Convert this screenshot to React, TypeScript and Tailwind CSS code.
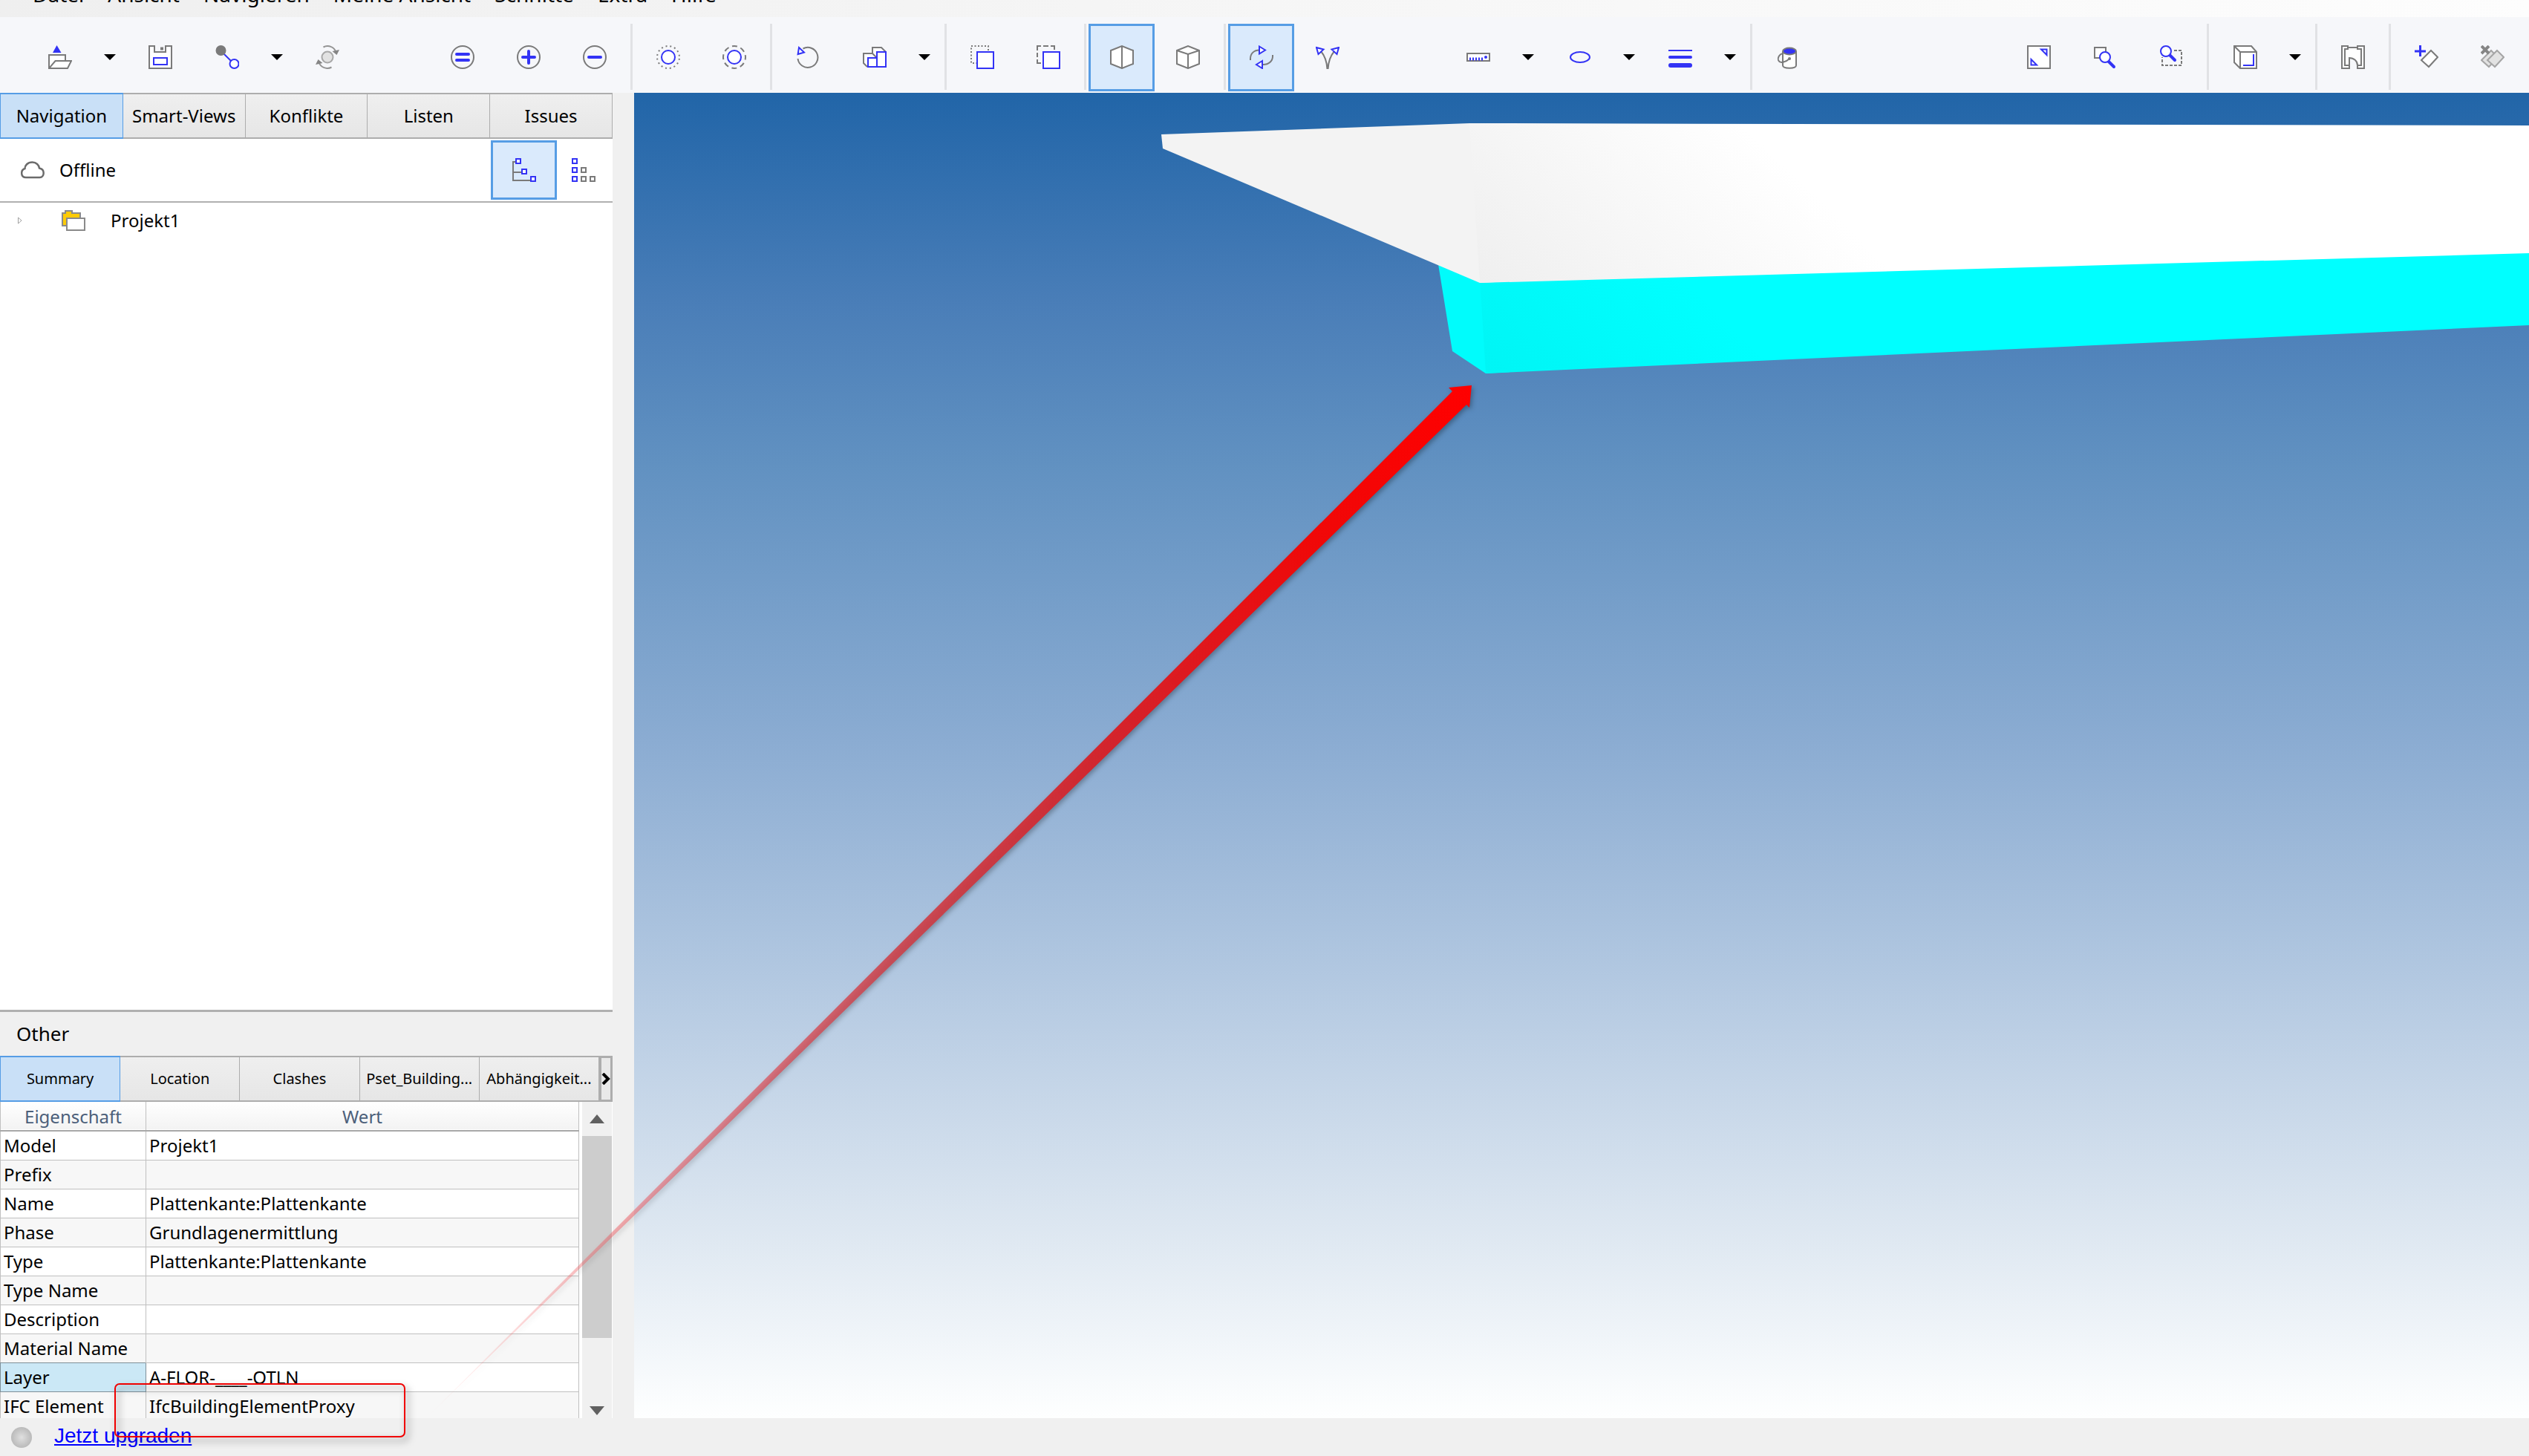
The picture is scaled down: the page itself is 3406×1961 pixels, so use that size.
import type { ReactNode } from "react";

const GRAY = "#7a7a7a";
const BLUE = "#3333f5";

function Icon({ children }: { children: ReactNode }) {
  return (
    <svg viewBox="0 0 32 32" className="size-8 shrink-0" fill="none" stroke={GRAY} strokeWidth="2">
      {children}
    </svg>
  );
}

const icons = {
  open: (
    <Icon>
      <path d="M6 10L11.5 0L17.5 10z" fill={BLUE} stroke="none" />
      <path d="M1 31V13h22v8" fill="#fff" />
      <path d="M9.500 21H31L26 31H1z" fill="#fff" />
    </Icon>
  ),
  save: (
    <Icon>
      <path d="M1 1h7v8h15V1h8v30H1z" fill="#fff" />
      <path d="M18 2.500v4" strokeWidth="4" />
      <rect x="7" y="17" width="18" height="9" stroke={BLUE} />
    </Icon>
  ),
  link: (
    <Icon>
      <path d="M9 9l13 13" stroke={BLUE} />
      <circle cx="7.500" cy="7" r="7" fill={GRAY} stroke="none" />
      <circle cx="25.500" cy="25" r="6" fill="#fff" stroke={BLUE} />
    </Icon>
  ),
  refresh: (
    <Icon>
      <circle cx="16" cy="16" r="7.500" fill="#e2e2e2" stroke="#a8a8a8" />
      <path d="M10.500 2.500C17 -1 25 2 27.500 9M21.500 29.500C15 33 7 30 4.500 23" stroke="#949494" />
      <path d="M22.500 8L32 6l-3.500 7zM9.500 24L0 26l3.500-7z" fill="#858585" stroke="none" />
    </Icon>
  ),
  equals: (
    <Icon>
      <circle cx="16" cy="16" r="15" />
      <path d="M8 12h16M8 20h16" stroke={BLUE} strokeWidth="4" strokeLinecap="round" />
    </Icon>
  ),
  plus: (
    <Icon>
      <circle cx="16" cy="16" r="15" />
      <path d="M8 16h16M16 8v16" stroke={BLUE} strokeWidth="4" strokeLinecap="round" />
    </Icon>
  ),
  minus: (
    <Icon>
      <circle cx="16" cy="16" r="15" />
      <path d="M8 16h16" stroke={BLUE} strokeWidth="4" strokeLinecap="round" />
    </Icon>
  ),
  dotted: (
    <Icon>
      <circle cx="16" cy="16" r="15" strokeDasharray="2 3.890" strokeDashoffset="4" />
      <circle cx="16" cy="16" r="9" fill="#fff" stroke={BLUE} />
    </Icon>
  ),
  dashed: (
    <Icon>
      <circle cx="16" cy="16" r="15" strokeDasharray="7 4.780" strokeDashoffset="3.500" />
      <circle cx="16" cy="16" r="9" fill="#fff" stroke={BLUE} />
    </Icon>
  ),
  rotate: (
    <Icon>
      <path d="M2.500 18A13.500 13.500 0 1 0 9.500 4.500" />
      <path d="M4 3l7 6.500L2.600 12z" fill="#fff" stroke={BLUE} />
    </Icon>
  ),
  build: (
    <Icon>
      <path d="M6 29l-5-5V11h12V3h12l6 6L19 29z" fill="#fff" stroke="none" />
      <path d="M6 29l-5-5V11h12V3h12l6 6M13 11l6 6" />
      <rect x="7" y="17" width="12" height="12" fill="#fff" stroke={BLUE} />
      <rect x="19" y="9" width="12" height="20" fill="#fff" stroke={BLUE} />
    </Icon>
  ),
  selectDotted: (
    <Icon>
      <path d="M24 7V1H1v23h7" strokeDasharray="2 2.500" />
      <rect x="9" y="9" width="22" height="22" fill="#fff" stroke={BLUE} />
    </Icon>
  ),
  selectDashed: (
    <Icon>
      <path d="M24 6V1h-5M16 1H9M6 1H1v6M1 10v6M1 19v5h5" />
      <rect x="9" y="9" width="22" height="22" fill="#fff" stroke={BLUE} />
    </Icon>
  ),
  halfCube: (
    <Icon>
      <path d="M1 7l15-6 15 6v18l-15 6-15-6z" fill="#fff" />
      <path d="M16 1v30" />
    </Icon>
  ),
  cube: (
    <Icon>
      <path d="M1 7l15-6 15 6v18l-15 6-15-6z" fill="#fff" />
      <path d="M1 7l15 5 15-5M16 12v19" />
    </Icon>
  ),
  orbit: (
    <Icon>
      <path d="M1 20V18C1 11 6 6.500 13 6.500M31 13v2c0 6-5 11-13 11" />
      <path d="M13 1.500l8 5L13 11.500zM17 21l-8 5 8 5z" fill="#fff" stroke={BLUE} />
    </Icon>
  ),
  fork: (
    <Icon>
      <path d="M7 8c5 6 8 13 8.500 24M25 8c-5 6-8 13-8.500 24" />
      <path d="M1 3l9.500 2.500L3.500 12zM31 3l-9.500 2.500L28.500 12z" fill="#fff" stroke={BLUE} />
    </Icon>
  ),
  ruler: (
    <Icon>
      <rect x="1" y="11" width="30" height="10" fill="#fff" />
      <path d="M5 16.500v4M9 16.500v4M13 16.500v4M17 16.500v4M21 16.500v4" stroke={BLUE} />
      <circle cx="26" cy="16" r="2" fill={BLUE} stroke="none" />
    </Icon>
  ),
  ellipse: (
    <Icon>
      <ellipse cx="17" cy="16" rx="13" ry="7" stroke={BLUE} />
    </Icon>
  ),
  lines: (
    <Icon>
      <g stroke={BLUE}>
        <path d="M0 7h32" />
        <path d="M2 16h28" strokeWidth="4" strokeLinecap="round" />
        <path d="M3 27h26" strokeWidth="6" strokeLinecap="round" />
      </g>
    </Icon>
  ),
  bucket: (
    <Icon>
      <path d="M9 8v19c0 5 18 5 18 0V8" fill="#fff" />
      <ellipse cx="18" cy="8" rx="9" ry="4.500" fill={BLUE} />
      <path d="M9 11C4 12 2 17 3 20c2 5 10 3 15-2" />
      <circle cx="18" cy="18" r="2" fill={GRAY} stroke="none" />
    </Icon>
  ),
  expand: (
    <Icon>
      <rect x="1" y="1" width="30" height="30" fill="#fff" />
      <path d="M19 5.500h7.500V13zM5.500 19v7.500H13z" stroke={BLUE} />
    </Icon>
  ),
  zoomObject: (
    <Icon>
      <rect x="2" y="3" width="15" height="14" fill="#fff" />
      <path d="M21 22l7 7" stroke={BLUE} strokeWidth="4" strokeLinecap="round" />
      <circle cx="16" cy="16" r="7" fill="#fff" stroke={BLUE} />
    </Icon>
  ),
  zoomArea: (
    <Icon>
      <path d="M20 7h10v20H4V16" strokeDasharray="4 2" />
      <path d="M14 13l7 7" stroke={BLUE} strokeWidth="4" strokeLinecap="round" />
      <circle cx="9" cy="8" r="7" fill="#fff" stroke={BLUE} />
    </Icon>
  ),
  box: (
    <Icon>
      <path d="M9 31L1 23V1h23l7 8v22z" fill="#fff" />
      <path d="M1 1l8 8h22M9 9v22" />
      <path d="M27 12v15H13" stroke={BLUE} />
    </Icon>
  ),
  gate: (
    <Icon>
      <path d="M9 3h13V1h9v30h-9v-4C22 21 17 17 11 17v14H1V1h8z" fill="#fff" />
      <path d="M9 3v2H5v22h6M22 3v2h5v22h-5" />
    </Icon>
  ),
  addPlane: (
    <Icon>
      <path d="M22 7l9 9-12 13-10-9z" fill="#fff" />
      <path d="M0 8h15M7.500 0v15" stroke={BLUE} strokeWidth="3" />
    </Icon>
  ),
  clearPlanes: (
    <Icon>
      <g fill="#e2e2e2" stroke="#a5a5a5">
        <path d="M14 7l9 9-12 13-10-9z" />
        <path d="M22 7l9 9-12 13-10-9z" />
      </g>
      <path d="M1 1l10 10M11 1L1 11" stroke="#858585" strokeWidth="4" />
    </Icon>
  ),
  tree: (
    <Icon>
      <path d="M5 5H1v25h24M1 19h12" />
      <g stroke={BLUE} fill="#fff">
        <rect x="5" y="1" width="6" height="6" />
        <rect x="13" y="15" width="6" height="6" />
        <rect x="25" y="25" width="6" height="6" />
      </g>
    </Icon>
  ),
  list: (
    <Icon>
      <g stroke={BLUE}>
        <rect x="1" y="1" width="6" height="6" />
        <rect x="1" y="13" width="6" height="6" />
        <rect x="1" y="25" width="6" height="6" />
      </g>
      <rect x="13" y="13" width="6" height="6" />
      <rect x="13" y="25" width="6" height="6" />
      <rect x="25" y="25" width="6" height="6" />
    </Icon>
  ),
};

type IconName = keyof typeof icons;

function ToolButton({ icon, label, active }: { icon: IconName; label: string; active?: boolean }) {
  return (
    <button
      aria-label={label}
      aria-pressed={active}
      className={
        active
          ? "flex w-[89px] h-[91px] shrink-0 items-center justify-center border-3 border-[#569de5] bg-[#daeafc] pb-[1px]"
          : "flex w-[89px] h-[91px] shrink-0 items-center justify-center pb-[1px]"
      }
    >
      {icons[icon]}
    </button>
  );
}

function SplitButton({ icon, label }: { icon: IconName; label: string }) {
  return (
    <button
      aria-label={label}
      aria-haspopup="menu"
      className="flex w-[136px] h-[91px] shrink-0 items-center gap-[43px] pl-[30px] pb-[1px]"
    >
      {icons[icon]}
      <svg viewBox="0 0 16 8" className="h-2 w-4">
        <path d="M0 0h16L8 8z" />
      </svg>
    </button>
  );
}

function Separator() {
  return <div className="ml-1 mr-[3px] h-[89px] w-[3px] shrink-0 bg-[#e1e2e5]" />;
}

const menus = ["Datei", "Ansicht", "Navigieren", "Meine Ansicht", "Schnitte", "Extra", "Hilfe"];

function MenuBar() {
  return (
    <header className="h-[23px] shrink-0 overflow-hidden bg-linear-to-r from-[#efefef] to-[#fdfdfd]">
      <nav className="-mt-7 flex gap-8 pl-11 text-[28px] leading-10">
        {menus.map((m) => (
          <button key={m}>{m}</button>
        ))}
      </nav>
    </header>
  );
}

function Toolbar() {
  return (
    <div className="flex h-[102px] shrink-0 overflow-hidden bg-[#f6f7fa] pt-[9px] pl-[35px]">
      <div className="flex">
        <SplitButton icon="open" label="Öffnen" />
        <ToolButton icon="save" label="Speichern" />
        <SplitButton icon="link" label="Verknüpfen" />
        <ToolButton icon="refresh" label="Aktualisieren" />
      </div>
      <div className="ml-[93px] flex">
        <ToolButton icon="equals" label="Gleich" />
        <ToolButton icon="plus" label="Hinzufügen" />
        <ToolButton icon="minus" label="Entfernen" />
        <Separator />
        <ToolButton icon="dotted" label="Ausblenden" />
        <ToolButton icon="dashed" label="Transparent" />
        <Separator />
        <ToolButton icon="rotate" label="Zurücksetzen" />
        <SplitButton icon="build" label="Komponenten" />
        <Separator />
        <ToolButton icon="selectDotted" label="Auswahl" />
        <ToolButton icon="selectDashed" label="Auswahl umkehren" />
        <Separator />
        <ToolButton icon="halfCube" label="Perspektive" active />
        <ToolButton icon="cube" label="Orthogonal" />
        <Separator />
        <ToolButton icon="orbit" label="Drehen" active />
        <ToolButton icon="fork" label="Gehen" />
      </div>
      <div className="ml-[113px] flex">
        <SplitButton icon="ruler" label="Messen" />
        <SplitButton icon="ellipse" label="Form" />
        <SplitButton icon="lines" label="Linienstärke" />
        <Separator />
        <ToolButton icon="bucket" label="Farbe" />
      </div>
      <div className="ml-[249px] flex">
        <ToolButton icon="expand" label="Alles zeigen" />
        <ToolButton icon="zoomObject" label="Objekt zoomen" />
        <ToolButton icon="zoomArea" label="Bereich zoomen" />
        <Separator />
        <SplitButton icon="box" label="Ansichten" />
        <Separator />
        <ToolButton icon="gate" label="Schnittbox" />
        <Separator />
        <ToolButton icon="addPlane" label="Schnitt hinzufügen" />
        <ToolButton icon="clearPlanes" label="Schnitte löschen" />
      </div>
    </div>
  );
}

function Tab({ label, active }: { label: string; active?: boolean }) {
  return (
    <button
      role="tab"
      aria-selected={!!active}
      className={
        active
          ? "min-w-0 flex-1 basis-0 whitespace-nowrap border-y-2 border-x border-[#569de5] bg-[#c9e0f7]"
          : "min-w-0 flex-1 basis-0 whitespace-nowrap border-y-2 border-r border-[#adadad] bg-linear-to-b from-[#efefef] to-[#e6e6e6]"
      }
    >
      {label}
    </button>
  );
}

function NavigationPanel() {
  return (
    <section className="flex min-h-0 flex-1 flex-col border-b-3 border-[#b0b0b0] bg-white">
      <div role="tablist" className="flex h-[62px] shrink-0">
        <Tab label="Navigation" active />
        <Tab label="Smart-Views" />
        <Tab label="Konflikte" />
        <Tab label="Listen" />
        <Tab label="Issues" />
      </div>
      <div className="flex h-[86px] shrink-0 items-center border-b-2 border-[#b0b0b0] pl-7">
        <svg viewBox="0 0 32 32" className="size-8" fill="none" stroke="#6b6b6b" strokeWidth="2.500">
          <path d="M7 26C-.500 26 -.500 16 5.500 14C5.500 10 9 5.500 15.500 5.500C21 5.500 24.500 9.500 25 13.500C33 15 32 26 25.500 26z" />
        </svg>
        <span className="ml-5 flex-1">Offline</span>
        <button
          aria-label="Baumansicht"
          aria-pressed="true"
          className="flex h-20 w-[89px] items-center justify-center border-3 border-[#569de5] bg-[#daeafc]"
        >
          {icons.tree}
        </button>
        <button aria-label="Listenansicht" className="mr-[3px] flex h-20 w-[72px] items-center justify-center">
          {icons.list}
        </button>
      </div>
      <div className="flex h-12 items-center pl-6">
        <svg viewBox="0 0 6 10" className="h-[10px] w-[6px]" fill="none" stroke="#a0a0a0">
          <path d="M.500 1l4.500 4-4.500 4z" />
        </svg>
        <svg viewBox="0 0 32 28" className="ml-[53px] h-7 w-8" stroke="#8a8a8a" strokeWidth="2">
          <path d="M1 21V4h4V1h9v3h11v17z" fill="#fdcb06" />
          <rect x="7" y="11" width="24" height="16" fill="#fff" />
        </svg>
        <span className="ml-[34px]">Projekt1</span>
      </div>
    </section>
  );
}

const properties = [
  ["Model", "Projekt1"],
  ["Prefix", ""],
  ["Name", "Plattenkante:Plattenkante"],
  ["Phase", "Grundlagenermittlung"],
  ["Type", "Plattenkante:Plattenkante"],
  ["Type Name", ""],
  ["Description", ""],
  ["Material Name", ""],
  ["Layer", "A-FLOR-____-OTLN"],
  ["IFC Element", "IfcBuildingElementProxy"],
];

function PropertiesPanel() {
  return (
    <section className="flex h-[547px] shrink-0 flex-col">
      <h2 className="flex h-[59px] shrink-0 items-center pl-[22px] text-[26px]">Other</h2>
      <div className="flex h-[62px] shrink-0 text-xl">
        <div role="tablist" className="flex min-w-0 flex-1">
          <Tab label="Summary" active />
          <Tab label="Location" />
          <Tab label="Clashes" />
          <Tab label="Pset_Building..." />
          <Tab label="Abhängigkeit..." />
        </div>
        <button
          aria-label="Weitere Reiter"
          className="flex w-[18px] items-center justify-center border-3 border-[#adadad] bg-[#e9e9e9]"
        >
          <svg viewBox="0 0 12 16" className="h-4 w-3 shrink-0" fill="none" stroke="#000" strokeWidth="4">
            <path d="M2 1l7 7-7 7" />
          </svg>
        </button>
      </div>
      <div className="flex min-h-0 flex-1 overflow-hidden bg-white">
        <div className="min-w-0 flex-1 overflow-hidden">
          <table className="w-full table-fixed border-collapse border-x border-[#c0c0c0]">
            <thead>
              <tr className="h-[39px] border-b-2 border-[#a8a8a8] bg-linear-to-b from-white to-[#f3f3f3] text-[#4c607a]">
                <th className="w-[196px] border-r border-[#c0c0c0] p-0 font-normal leading-[37px]">Eigenschaft</th>
                <th className="p-0 font-normal leading-[37px]">Wert</th>
              </tr>
            </thead>
            <tbody>
              {properties.map(([name, value]) => (
                <tr key={name} className="h-[39px] border-b border-[#c0c0c0] even:bg-[#f7f7f7]">
                  <td
                    className={
                      name === "Layer"
                        ? "whitespace-nowrap border border-[#7f8f98] bg-[#cbe8f6] p-0 pl-1 leading-[38px]"
                        : "whitespace-nowrap border-r border-[#c0c0c0] p-0 pl-1 leading-[38px]"
                    }
                  >
                    {name}
                  </td>
                  <td className="whitespace-nowrap p-0 pl-1 leading-[38px]">{value}</td>
                </tr>
              ))}
            </tbody>
          </table>
        </div>
        <div className="ml-1 mr-px flex w-10 flex-col items-center bg-[#f0f0f0]">
          <svg viewBox="0 0 20 12" className="my-[17px] h-3 w-5 shrink-0" fill="#606060">
            <path d="M0 12L10 0l10 12z" />
          </svg>
          <div className="h-[272px] w-full bg-[#cdcdcd]" />
          <svg viewBox="0 0 20 12" className="mt-auto mb-1 h-3 w-5 shrink-0" fill="#606060">
            <path d="M0 0h20L10 12z" />
          </svg>
        </div>
      </div>
    </section>
  );
}

function Viewport() {
  return (
    <main className="min-w-0 flex-1 bg-[linear-gradient(to_bottom,#2165a8_0%,#4a7eb8_16%,#6191c1_28%,#8bacd2_49%,#b5cae2_68%,#e0e9f2_87%,#feffff_100%)]">
      <svg viewBox="0 0 2552 1785" preserveAspectRatio="xMinYMin slice" className="h-full w-full">
        <defs>
          <linearGradient id="slab" gradientUnits="userSpaceOnUse" x1="1139" y1="256" x2="1420" y2="-30">
            <stop offset="0" stopColor="#efefef" />
            <stop offset="1" stopColor="#ffffff" />
          </linearGradient>
          <linearGradient id="edge" gradientUnits="userSpaceOnUse" x1="1147" y1="378" x2="1340" y2="180">
            <stop offset="0" stopColor="#00f5f5" />
            <stop offset="1" stopColor="#00ffff" />
          </linearGradient>
        </defs>
        <path d="M1083 231L1102 348L1147 378L1180 376L1170 240z" fill="#00fcfc" />
        <path d="M1139 250L2552 210V313L1147 378z" fill="url(#edge)" />
        <path d="M710 56L1125 41L1160 42L1160 255L1139 256L712 75z" fill="#f3f3f3" />
        <path d="M1125 41L2552 44V216L1139 256z" fill="url(#slab)" />
      </svg>
    </main>
  );
}

// red callout: frame around the IFC element and an arrow fading in towards the model edge
function Callout() {
  return (
    <div className="pointer-events-none absolute inset-0 overflow-hidden">
      <svg width="2000" height="1961" viewBox="0 0 2000 1961" className="max-w-none">
        <defs>
          <linearGradient id="fade" gradientUnits="userSpaceOnUse" x1="572" y1="1912" x2="1982" y2="519">
            <stop offset="0" stopColor="#ff4040" stopOpacity="0" />
            <stop offset="0.200" stopColor="#f04850" stopOpacity="0.450" />
            <stop offset="0.450" stopColor="#d03c44" stopOpacity="0.850" />
            <stop offset="0.650" stopColor="#d4222a" stopOpacity="0.980" />
            <stop offset="0.850" stopColor="#f00808" />
            <stop offset="1" stopColor="#ff0000" />
          </linearGradient>
        </defs>
        <path
          d="M572 1912L1956 527L1951 522L1982 519L1979 549L1975 545z"
          fill="url(#fade)"
          className="drop-shadow-[2px_3px_3px_rgba(0,0,0,0.3)]"
        />
        <rect
          x="155"
          y="1864"
          width="390"
          height="71"
          rx="6"
          fill="none"
          stroke="#f00000"
          strokeWidth="2"
          className="drop-shadow-[4px_5px_5px_rgba(0,0,0,0.5)]"
        />
      </svg>
    </div>
  );
}

function StatusBar() {
  return (
    <footer className="flex h-[51px] shrink-0 items-start bg-[#f0f0f0] pl-[15px]">
      <span className="mt-3 size-7 rounded-full bg-radial from-[#e0e0e0] to-[#ababab]" />
      <a
        href="#upgrade"
        className="ml-[30px] mt-1 font-['Liberation_Sans',Arial,sans-serif] text-[28px] leading-[40px] text-[#0000ff] underline"
      >
        Jetzt upgraden
      </a>
    </footer>
  );
}

export default function App() {
  return (
    <div className="relative flex h-screen flex-col overflow-hidden bg-[#f0f0f0] font-['Noto_Sans','Open_Sans',sans-serif] text-2xl text-black">
      <MenuBar />
      <Toolbar />
      <div className="flex min-h-0 flex-1">
        <aside className="mr-[29px] flex w-[825px] shrink-0 flex-col">
          <NavigationPanel />
          <PropertiesPanel />
        </aside>
        <Viewport />
      </div>
      <StatusBar />
      <Callout />
    </div>
  );
}
